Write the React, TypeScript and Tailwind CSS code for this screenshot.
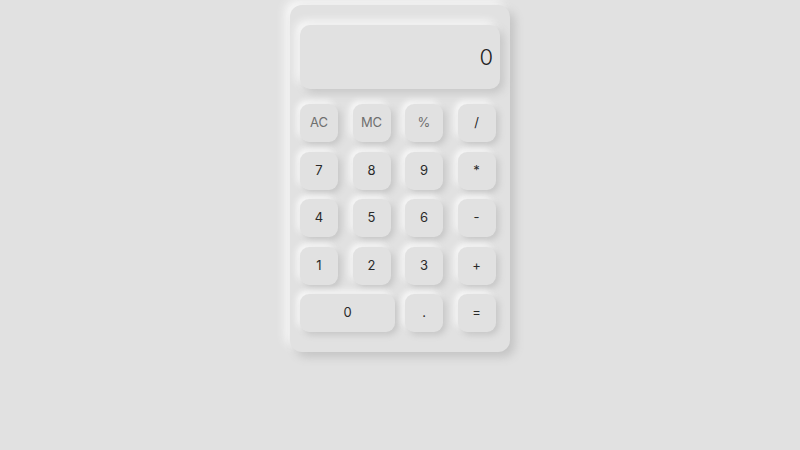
import React, { useState } from "react";

const keys: { label: string; muted?: boolean; wide?: boolean }[] = [
  { label: "AC", muted: true },
  { label: "MC", muted: true },
  { label: "%", muted: true },
  { label: "/" },
  { label: "7" },
  { label: "8" },
  { label: "9" },
  { label: "*" },
  { label: "4" },
  { label: "5" },
  { label: "6" },
  { label: "-" },
  { label: "1" },
  { label: "2" },
  { label: "3" },
  { label: "+" },
  { label: "0", wide: true },
  { label: "." },
  { label: "=" },
];

const App = () => {
  const [display] = useState("0");

  return (
    <div
      className="min-h-[450px] w-full bg-[#e1e1e1] flex justify-center"
      style={{ fontFamily: "Inter, 'Noto Sans', sans-serif" }}
    >
      <div className="mt-[5px] w-[220px] h-[347px] rounded-[12px] bg-[#e1e1e1] px-[10px] pt-[20px] shadow-[5px_5px_10px_#c4c4c4,-5px_-5px_10px_#f8f8f8]">
        {/* Display */}
        <div className="h-[64px] w-[200px] rounded-[10px] bg-[#e1e1e1] flex items-center justify-end pr-[7px] shadow-[4px_4px_8px_#c6c6c6,-4px_-4px_8px_#fbfbfb]">
          <span className="text-[22px] font-light text-[#222]">{display}</span>
        </div>

        {/* Keys */}
        <div className="mt-[15px] grid grid-cols-[repeat(4,38px)] gap-x-[14.5px] gap-y-[9.5px]">
          {keys.map((k) => (
            <button
              key={k.label}
              className={`h-[38px] rounded-[9px] bg-[#e1e1e1] flex items-center justify-center text-[13px] shadow-[3px_3px_6px_#c6c6c6,-3px_-3px_6px_#fbfbfb] ${
                k.wide ? "col-span-2 w-[95px]" : "w-[38px]"
              } ${k.muted ? "text-[#6f6f6f]" : "text-[#2a2a2a]"}`}
            >
              {k.label}
            </button>
          ))}
        </div>
      </div>
    </div>
  );
};

export default App;
